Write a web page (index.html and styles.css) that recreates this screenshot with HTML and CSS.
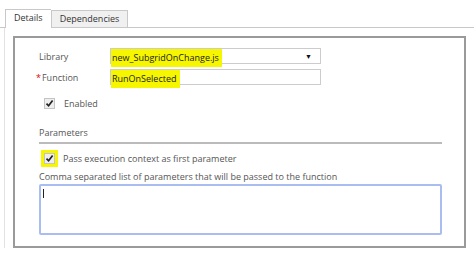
FILE: index.html
```html
<!DOCTYPE html>
<html lang="en">
<head>
  <meta charset="UTF-8" />
  <title>Handler Properties</title>
  <link rel="stylesheet" href="styles.css">
</head>
<body>

  <div class="tabs">
    <div class="tab active">Details</div>
    <div class="tab">Dependencies</div>
  </div>

  <div class="panel">
    <div class="box">
      <div class="row">
        <span class="label">Library</span>
        <div class="field select">
          <span class="mark">new_SubgridOnChange.js</span>
          <span class="arrow">&#9660;</span>
        </div>
      </div>
      <div class="row">
        <span class="label"><span class="req">*</span>Function</span>
        <div class="field">
          <span class="mark">RunOnSelected</span>
        </div>
      </div>
      <div class="check-row enabled">
        <span class="check">
          <svg width="9" height="9" viewBox="0 0 9 9"><path d="M1.5 4.6 L3.6 6.8 L7.6 1.6" fill="none" stroke="#222" stroke-width="1.7"/></svg>
        </span>
        <span>Enabled</span>
      </div>

      <div class="section">Parameters</div>
      <div class="rule"></div>

      <div class="check-row">
        <span class="check-mark">
          <span class="check">
            <svg width="9" height="9" viewBox="0 0 9 9"><path d="M1.5 4.6 L3.6 6.8 L7.6 1.6" fill="none" stroke="#222" stroke-width="1.7"/></svg>
          </span>
        </span>
        <span>Pass execution context as first parameter</span>
      </div>
      <div class="hint">Comma separated list of parameters that will be passed to the function</div>
      <div class="params"><span class="caret"></span></div>
    </div>
  </div>

</body>
</html>
```

FILE: styles.css
```css
body {
  margin: 0;
  font-family: "Open Sans", "Noto Sans", sans-serif;
  font-size: 9px;
  color: #444;
  background: #fff;
}
.tabs {
  display: flex;
  align-items: flex-end;
  padding: 10px 0 0 5px;
  border-bottom: 1px solid #c8c8c8;
  height: 17px;
}
.tab {
  height: 16px;
  line-height: 16px;
  padding: 0 8px;
  border: 1px solid #c8c8c8;
  border-bottom: none;
  background: #f0f0f0;
  color: #333;
}
.tab.active {
  background: #fff;
  height: 18px;
  margin-bottom: -1px;
  border-right: none;
}
.panel {
  margin-left: 4px;
  border-left: 1px solid #e2e2e2;
  padding: 8px 8px 0 8px;
}
.box {
  box-sizing: border-box;
  border: 2px solid #9a9a9a;
  padding: 10px 22px 10px 24px;
  height: 212px;
}
.row {
  display: flex;
  align-items: center;
  height: 16px;
  margin-bottom: 5px;
}
.label {
  width: 71px;
  color: #555;
}
.req {
  color: #d00;
  margin-left: -3px;
  margin-right: 1px;
}
.field {
  width: 209px;
  height: 14px;
  border: 1px solid #ccc;
  display: flex;
  align-items: center;
  color: #222;
}
.select {
  justify-content: space-between;
}
.mark {
  background: #f6f600;
  padding: 2px 3px 3px 1px;
  margin-top: 3px;
}
.arrow {
  font-size: 7px;
  color: #111;
  margin-right: 8px;
}
.check-row {
  display: flex;
  align-items: center;
  height: 14px;
  margin-left: 5px;
  color: #555;
}
.check-row.enabled {
  margin-top: 11px;
}
.check {
  width: 9px;
  height: 9px;
  border: 1px solid #c4c4c4;
  background: #eee;
  display: flex;
  margin-right: 9px;
}
.check-mark {
  background: #f6f600;
  padding: 3px;
  margin-left: -3px;
  margin-right: 5px;
}
.check-mark .check {
  margin-right: 0;
}
.section {
  margin-top: 16px;
  color: #555;
}
.rule {
  height: 2px;
  background: #bbb;
  margin: 3px 0 7px;
}
.hint {
  margin-top: 5px;
  color: #555;
}
.params {
  box-sizing: border-box;
  height: 51px;
  border: 2px solid #a9bdf0;
  border-radius: 2px;
  margin-top: 1px;
  padding: 3px 2px;
}
.caret {
  display: block;
  width: 1px;
  height: 9px;
  background: #222;
}
```
